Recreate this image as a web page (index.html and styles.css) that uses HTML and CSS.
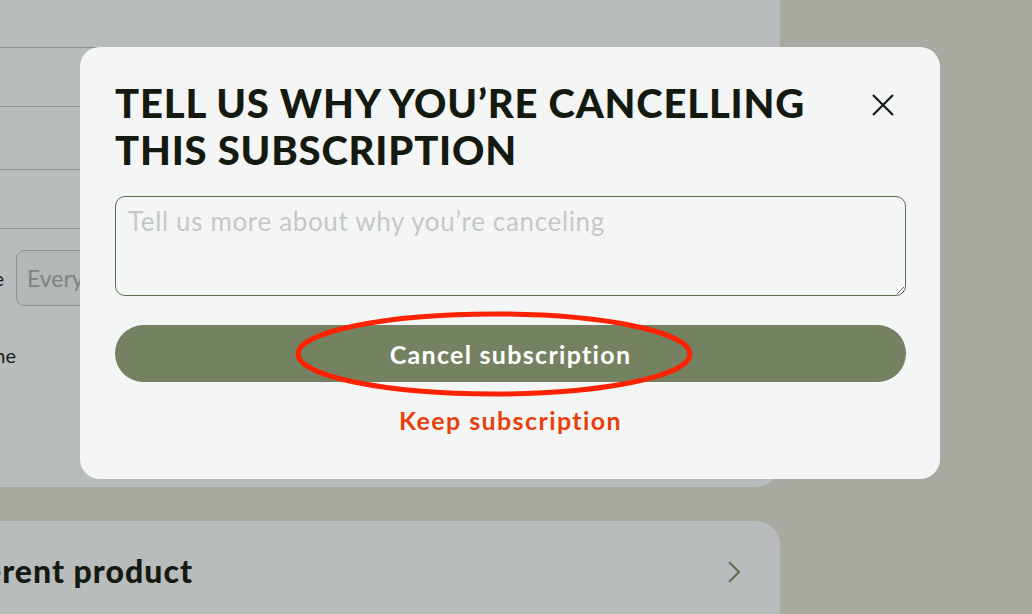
FILE: index.html
```html
<!DOCTYPE html>
<html lang="en">
<head>
    <meta charset="UTF-8">
    <meta name="viewport" content="width=device-width, initial-scale=1.0">
    <title>Cancel subscription</title>
    <link rel="stylesheet" href="styles.css">
</head>
<body>
    <main class="page">
        <section class="card card-settings">
            <div class="row row-top"></div>
            <div class="row"></div>
            <div class="row"></div>
            <div class="row"></div>
            <div class="field-row">
                <label class="field-label" for="schedule">Schedule</label>
                <input class="field-input" id="schedule" type="text" value="Every 4 weeks" readonly>
            </div>
            <p class="note">Next order: June</p>
        </section>

        <section class="card card-swap">
            <h2 class="swap-title">Swap for a different product</h2>
            <svg class="chevron" width="14" height="24" viewBox="0 0 14 24">
                <path d="M2 2 L12 12 L2 22" fill="none" stroke="#5b6a4b" stroke-width="2"/>
            </svg>
        </section>
    </main>

    <div class="modal">
        <div class="modal-head">
            <h1 class="modal-title">TELL US WHY YOU’RE CANCELLING THIS SUBSCRIPTION</h1>
            <button class="close-btn" aria-label="Close">
                <svg width="22" height="22" viewBox="0 0 22 22">
                    <path d="M1 1 L21 21 M21 1 L1 21" stroke="#141a10" stroke-width="2.2"/>
                </svg>
            </button>
        </div>
        <textarea class="reason" placeholder="Tell us more about why you’re canceling" autofocus></textarea>
        <button class="cancel-btn">Cancel subscription</button>
        <button class="keep-btn">Keep subscription</button>
    </div>

    <svg class="highlight" width="400" height="90" viewBox="0 0 400 90">
        <ellipse cx="200" cy="45" rx="196" ry="40" fill="none" stroke="#ff2200" stroke-width="5"/>
    </svg>
</body>
</html>
```

FILE: styles.css
```css
html, body {
    margin: 0;
    height: 100%;
}
body {
    background: #aaa9a1;
    font-family: Lato, "Open Sans", sans-serif;
    overflow: hidden;
    position: relative;
}

.page {
    margin-left: -420px;
    width: 1200px;
    display: flex;
    flex-direction: column;
    gap: 34px;
}

.card {
    background: #b9bcbc;
    border-radius: 0 0 24px 24px;
}
.card-settings {
    height: 487px;
    display: flex;
    flex-direction: column;
}
.row {
    box-sizing: border-box;
    height: 59px;
    border-top: 1px solid #8f938f;
}
.row-top {
    height: 47px;
    border-top: none;
}
.row:nth-child(3) { height: 63px; }

.field-row {
    display: flex;
    align-items: center;
    gap: 12px;
    border-top: 1px solid #8f938f;
    padding-top: 21px;
}
.field-label {
    width: 424px;
    text-align: right;
    font-size: 20px;
    color: #1d2218;
}
.field-input {
    width: 260px;
    height: 56px;
    box-sizing: border-box;
    border: 1.5px solid #8f938f;
    border-radius: 8px;
    background: #b4b7b7;
    font-family: inherit;
    font-size: 23px;
    color: #7e827e;
    padding: 0 10px;
}
.note {
    width: 436px;
    text-align: right;
    margin: 37px 0 0;
    font-size: 20px;
    color: #1d2218;
}

.card-swap {
    border-radius: 24px 24px 0 0;
    height: 120px;
    display: flex;
    align-items: flex-start;
}
.swap-title {
    width: 613px;
    text-align: right;
    margin: 30px 0 0;
    font-size: 32px;
    font-weight: 900;
    letter-spacing: 1px;
    color: #141a10;
}
.chevron {
    margin: 39px 0 0 534px;
}

.modal {
    position: absolute;
    left: 80px;
    top: 47px;
    width: 860px;
    height: 432px;
    box-sizing: border-box;
    padding: 33px 34px 0 35px;
    background: #f4f6f5;
    border-radius: 20px;
    display: flex;
    flex-direction: column;
    align-items: center;
}
.modal-head {
    display: flex;
    justify-content: space-between;
    align-items: flex-start;
    align-self: stretch;
}
.modal-title {
    margin: 0;
    width: 720px;
    font-size: 40px;
    line-height: 47px;
    font-weight: 900;
    letter-spacing: 0.8px;
    color: #141a10;
}
.close-btn {
    margin: 14px 12px 0 0;
    padding: 0;
    border: none;
    background: none;
    width: 22px;
    height: 22px;
}
.close-btn svg {
    display: block;
}

.reason {
    margin-top: 22px;
    align-self: stretch;
    height: 100px;
    box-sizing: border-box;
    border: 1.5px solid #5d6b4f;
    border-radius: 10px;
    background: #f4f6f5;
    padding: 8px 12px;
    font-family: inherit;
    font-size: 26px;
    letter-spacing: 0.65px;
    color: #141a10;
    caret-color: #141a10;
    outline: none;
    resize: vertical;
}
.reason::placeholder {
    color: #c6c8c6;
}

.cancel-btn {
    margin-top: 29px;
    align-self: stretch;
    height: 57px;
    border: none;
    border-radius: 29px;
    background: #758262;
    color: #ffffff;
    font-family: inherit;
    font-size: 25px;
    font-weight: 700;
    letter-spacing: 1.3px;
}
.keep-btn {
    margin-top: 22px;
    border: none;
    background: none;
    color: #e8400c;
    font-family: inherit;
    font-size: 25px;
    font-weight: 700;
    letter-spacing: 1.4px;
    line-height: 30px;
}

.highlight {
    position: absolute;
    left: 294px;
    top: 309px;
}
```
